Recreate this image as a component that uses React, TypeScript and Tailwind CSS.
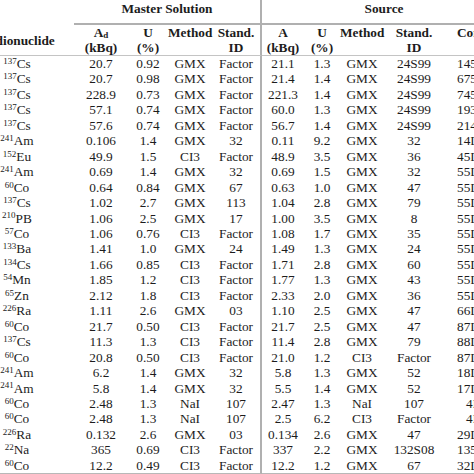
import React from "react";

type Row = [string, string, string, string, string, string, string, string, string, string, string];

const rows: Row[] = [
  ["137", "Cs", "20.7", "0.92", "GMX", "Factor", "21.1", "1.3", "GMX", "24S99", "1453"],
  ["137", "Cs", "20.7", "0.98", "GMX", "Factor", "21.4", "1.4", "GMX", "24S99", "6753"],
  ["137", "Cs", "228.9", "0.73", "GMX", "Factor", "221.3", "1.4", "GMX", "24S99", "7453"],
  ["137", "Cs", "57.1", "0.74", "GMX", "Factor", "60.0", "1.3", "GMX", "24S99", "1930"],
  ["137", "Cs", "57.6", "0.74", "GMX", "Factor", "56.7", "1.4", "GMX", "24S99", "2140"],
  ["241", "Am", "0.106", "1.4", "GMX", "32", "0.11", "9.2", "GMX", "32", "14D"],
  ["152", "Eu", "49.9", "1.5", "CI3", "Factor", "48.9", "3.5", "GMX", "36", "45D"],
  ["241", "Am", "0.69", "1.4", "GMX", "32", "0.69", "1.5", "GMX", "32", "55D"],
  ["60", "Co", "0.64", "0.84", "GMX", "67", "0.63", "1.0", "GMX", "47", "55D"],
  ["137", "Cs", "1.02", "2.7", "GMX", "113", "1.04", "2.8", "GMX", "79", "55D"],
  ["210", "PB", "1.06", "2.5", "GMX", "17", "1.00", "3.5", "GMX", "8", "55D"],
  ["57", "Co", "1.06", "0.76", "CI3", "Factor", "1.08", "1.7", "GMX", "35", "55D"],
  ["133", "Ba", "1.41", "1.0", "GMX", "24", "1.49", "1.3", "GMX", "24", "55D"],
  ["134", "Cs", "1.66", "0.85", "CI3", "Factor", "1.71", "2.8", "GMX", "60", "55D"],
  ["54", "Mn", "1.85", "1.2", "CI3", "Factor", "1.77", "1.3", "GMX", "43", "55D"],
  ["65", "Zn", "2.12", "1.8", "CI3", "Factor", "2.33", "2.0", "GMX", "36", "55D"],
  ["226", "Ra", "1.11", "2.6", "GMX", "03", "1.10", "2.5", "GMX", "47", "66D"],
  ["60", "Co", "21.7", "0.50", "CI3", "Factor", "21.7", "2.5", "GMX", "47", "87D"],
  ["137", "Cs", "11.3", "1.3", "CI3", "Factor", "11.4", "2.8", "GMX", "79", "88D"],
  ["60", "Co", "20.8", "0.50", "CI3", "Factor", "21.0", "1.2", "CI3", "Factor", "87D"],
  ["241", "Am", "6.2", "1.4", "GMX", "32", "5.8", "1.3", "GMX", "52", "18D"],
  ["241", "Am", "5.8", "1.4", "GMX", "32", "5.5", "1.4", "GMX", "52", "17D"],
  ["60", "Co", "2.48", "1.3", "NaI", "107", "2.47", "1.3", "NaI", "107", "4D"],
  ["60", "Co", "2.48", "1.3", "NaI", "107", "2.5", "6.2", "CI3", "Factor", "4D"],
  ["226", "Ra", "0.132", "2.6", "GMX", "03", "0.134", "2.6", "GMX", "47", "29D"],
  ["22", "Na", "365", "0.69", "CI3", "Factor", "337", "2.2", "GMX", "132S08", "1353"],
  ["60", "Co", "12.2", "0.49", "CI3", "Factor", "12.2", "1.2", "GMX", "67", "32D"],
];

export default function App() {
  return (
    <div
      className="w-[474px] h-[474px] overflow-hidden bg-white text-[#1c1c1c] text-[13.3px]"
      style={{ fontFamily: '"Liberation Serif", "Times New Roman", serif' }}
    >
      <div className="ml-[-40px] w-[546px] grid grid-cols-[114px_54px_40px_44px_50px_42px_36px_44px_60px_62px]">
        {/* header row 1 */}
        <div className="h-[25px]" />
        <div className="col-span-4 h-[25px] pt-[1px] leading-[15.45px] text-center font-bold border-b-2 border-r-2 border-[#b0b0b0]">
          Master Solution
        </div>
        <div className="col-span-5 h-[25px] pt-[1px] leading-[15.45px] text-center font-bold border-b-2 border-[#b0b0b0]">
          Source
        </div>

        {/* header row 2 */}
        <div className="h-[31px] flex items-center justify-center font-bold leading-[15px] border-b border-[#c4c4c4]">
          Radionuclide
        </div>
        <div className="h-[31px] text-center font-bold leading-[15px] border-b border-[#c4c4c4]">
          A<sub className="text-[9px] bottom-[-0.1em]">d</sub>
          <br />
          (kBq)
        </div>
        <div className="h-[31px] text-center font-bold leading-[15px] border-b border-[#c4c4c4]">
          U<br />(%)
        </div>
        <div className="h-[31px] text-center font-bold leading-[15px] border-b border-[#c4c4c4]">
          Method
        </div>
        <div className="h-[31px] text-center font-bold leading-[15px] border-b border-r-2 border-b-[#c4c4c4] border-r-[#b0b0b0]">
          Stand.<br />ID
        </div>
        <div className="h-[31px] text-center font-bold leading-[15px] border-b border-[#c4c4c4]">
          A<br />(kBq)
        </div>
        <div className="h-[31px] text-center font-bold leading-[15px] border-b border-[#c4c4c4]">
          U<br />(%)
        </div>
        <div className="h-[31px] text-center font-bold leading-[15px] border-b border-[#c4c4c4]">
          Method
        </div>
        <div className="h-[31px] text-center font-bold leading-[15px] border-b border-[#c4c4c4]">
          Stand.<br />ID
        </div>
        <div className="h-[31px] pl-[13px] text-left font-bold leading-[15px] border-b border-[#c4c4c4] whitespace-nowrap">
          Conc.
        </div>

        {/* data rows */}
        {rows.map((r, i) => {
          const last = i === rows.length - 1;
          const b = last ? " border-b-2 border-b-[#b8b8b8]" : "";
          return (
            <React.Fragment key={i}>
              <div className={"text-center leading-[15.45px] whitespace-nowrap" + b}>
                <sup className="text-[9px] top-[-0.45em]">{r[0]}</sup>
                {r[1]}
              </div>
              <div className={"text-center leading-[15.45px]" + b}>{r[2]}</div>
              <div className={"text-center leading-[15.45px]" + b}>{r[3]}</div>
              <div className={"text-center leading-[15.45px]" + b}>{r[4]}</div>
              <div className={"text-center leading-[15.45px] border-r-2 border-r-[#b0b0b0]" + b}>{r[5]}</div>
              <div className={"text-center leading-[15.45px]" + b}>{r[6]}</div>
              <div className={"text-center leading-[15.45px]" + b}>{r[7]}</div>
              <div className={"text-center leading-[15.45px]" + b}>{r[8]}</div>
              <div className={"text-center leading-[15.45px]" + b}>{r[9]}</div>
              <div
                className={
                  "text-left leading-[15.45px] whitespace-nowrap " +
                  (r[10].length === 2 ? "pl-[22px]" : "pl-[13px]") +
                  b
                }
              >
                {r[10]}
              </div>
            </React.Fragment>
          );
        })}
      </div>
    </div>
  );
}
